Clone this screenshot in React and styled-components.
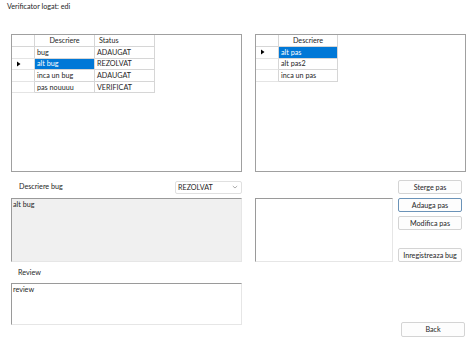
import styled, { createGlobalStyle } from "styled-components"

const GlobalStyle = createGlobalStyle`
  html, body {
    margin:0;
    padding:0;
    background:#ffffff;
  }
  body {
    font-family:Lato, "Open Sans", sans-serif;
    font-size:7.2px;
    color:#262626;
  }
`

const bugs = [
  { descriere: "bug", status: "ADAUGAT" },
  { descriere: "alt bug", status: "REZOLVAT" },
  { descriere: "inca un bug", status: "ADAUGAT" },
  { descriere: "pas nouuuu", status: "VERIFICAT" },
]

const pasi = ["alt pas", "alt pas2", "inca un pas"]

const Arrow = () => (
  <svg width="4" height="6" viewBox="0 0 4 6">
    <path d="M0 0.5 L3.5 3 L0 5.5 Z" fill="#000" />
  </svg>
)

const Chevron = () => (
  <svg width="6" height="4" viewBox="0 0 6 4">
    <path d="M0.8 1 L3 3 L5.2 1" fill="none" stroke="#888" strokeWidth="0.7" />
  </svg>
)

const App = () => {
  return (
    <Page>
      <GlobalStyle />
      <Title>Verificator logat: edi</Title>
      <TopRow>
        <GridBox $w={231}>
          <Table $cols="23px 60px 60px">
            <HeadCell $corner />
            <HeadCell>Descriere</HeadCell>
            <HeadCell $left>Status</HeadCell>
            {bugs.map((b, i) => (
              <Row key={b.descriere}>
                <Selector>{i === 1 && <Arrow />}</Selector>
                <Cell $selected={i === 1}>{b.descriere}</Cell>
                <Cell>{b.status}</Cell>
              </Row>
            ))}
          </Table>
        </GridBox>
        <GridBox $w={211}>
          <Table $cols="23px 59px">
            <HeadCell $corner />
            <HeadCell>Descriere</HeadCell>
            {pasi.map((p, i) => (
              <Row key={p}>
                <Selector>{i === 0 && <Arrow />}</Selector>
                <Cell $selected={i === 0}>{p}</Cell>
              </Row>
            ))}
          </Table>
        </GridBox>
      </TopRow>
      <Bottom>
        <LeftCol>
          <LabelRow>
            <Label>Descriere bug</Label>
            <Combo>
              <span>REZOLVAT</span>
              <Chevron />
            </Combo>
          </LabelRow>
          <TextArea $h={64} $gray>alt bug</TextArea>
          <ReviewLabel>Review</ReviewLabel>
          <TextArea $h={42}>review</TextArea>
        </LeftCol>
        <RightSide>
          <StepRow>
            <StepBox />
            <Buttons>
              <Button>Sterge pas</Button>
              <Button $focused>Adauga pas</Button>
              <Button>Modifica pas</Button>
              <Button $gap>Inregistreaza bug</Button>
            </Buttons>
          </StepRow>
          <BackButton>Back</BackButton>
        </RightSide>
      </Bottom>
    </Page>
  )
}

export default App

const Page = styled.div`
  width:474px;
  height:343px;
  box-sizing:border-box;
  padding:0 8px 0 11px;
  display:flex;
  flex-direction:column;
  overflow:hidden;
`
const Title = styled.div`
  margin:2px 0 0 -4px;
  height:10px;
  line-height:10px;
`
const TopRow = styled.div`
  margin-top:22px;
  display:flex;
  gap:13px;
`
const GridBox = styled.div`
  width:${p => p.$w}px;
  height:138px;
  box-sizing:border-box;
  border:1px solid #a0a0a0;
  background:#ffffff;
`
const Table = styled.div`
  display:grid;
  grid-template-columns:${p => p.$cols};
  grid-auto-rows:11.6px;
  grid-template-rows:12px;
`
const Row = styled.div`
  display:contents;
`
const HeadCell = styled.div`
  box-sizing:border-box;
  border-right:1px solid #d6d6d6;
  border-bottom:1px solid #d6d6d6;
  display:flex;
  align-items:center;
  justify-content:${p => (p.$left ? "flex-start" : "center")};
  padding-left:${p => (p.$left ? "4px" : "0")};
`
const Selector = styled.div`
  box-sizing:border-box;
  border-right:1px solid #d6d6d6;
  border-bottom:1px solid #e4e4e4;
  display:flex;
  align-items:center;
  padding-left:5px;
`
const Cell = styled.div`
  box-sizing:border-box;
  border-right:1px solid #d6d6d6;
  border-bottom:1px solid #d6d6d6;
  padding-left:2px;
  display:flex;
  align-items:center;
  white-space:nowrap;
  background:${p => (p.$selected ? "#0078d7" : "transparent")};
  color:${p => (p.$selected ? "#ffffff" : "#262626")};
`
const Bottom = styled.div`
  margin-top:8px;
  display:flex;
  gap:13px;
  flex:1;
`
const LeftCol = styled.div`
  width:231px;
  display:flex;
  flex-direction:column;
`
const LabelRow = styled.div`
  height:14px;
  display:flex;
  align-items:center;
  justify-content:space-between;
`
const Label = styled.div`
  padding-left:8px;
  margin-top:-2px;
`
const Combo = styled.div`
  width:67px;
  height:13px;
  box-sizing:border-box;
  border:1px solid #e0e0e0;
  border-radius:2px;
  background:#ffffff;
  display:flex;
  align-items:center;
  justify-content:space-between;
  padding:0 3px 0 2px;
`
const TextArea = styled.div`
  margin-top:4px;
  height:${p => p.$h}px;
  box-sizing:border-box;
  background:${p => (p.$gray ? "#f0f0f0" : "#ffffff")};
  border:1px solid #e6e6e6;
  border-top-color:#9a9a9a;
  border-left-color:#9a9a9a;
  padding:1px 1px;
  line-height:9px;
`
const ReviewLabel = styled.div`
  margin-top:5px;
  height:12px;
  line-height:12px;
  padding-left:7px;
`
const RightSide = styled.div`
  width:211px;
  display:flex;
  flex-direction:column;
`
const StepRow = styled.div`
  display:flex;
  gap:5px;
`
const StepBox = styled.div`
  margin-top:18px;
  width:138px;
  height:64px;
  box-sizing:border-box;
  border:1px solid #e6e6e6;
  border-top-color:#9a9a9a;
  border-left-color:#9a9a9a;
  background:#ffffff;
`
const Buttons = styled.div`
  width:64px;
  display:flex;
  flex-direction:column;
  gap:4px;
`
const Button = styled.div`
  height:14px;
  margin-top:${p => (p.$gap ? "14px" : "0")};
  box-sizing:border-box;
  border:1px solid ${p => (p.$focused ? "#6b93b8" : "#d4d4d4")};
  border-radius:2px;
  background:#fdfdfd;
  display:flex;
  align-items:center;
  justify-content:center;
  white-space:nowrap;
`
const BackButton = styled(Button)`
  margin-top:60px;
  align-self:flex-end;
  margin-right:1px;
  width:64px;
  height:15px;
`
